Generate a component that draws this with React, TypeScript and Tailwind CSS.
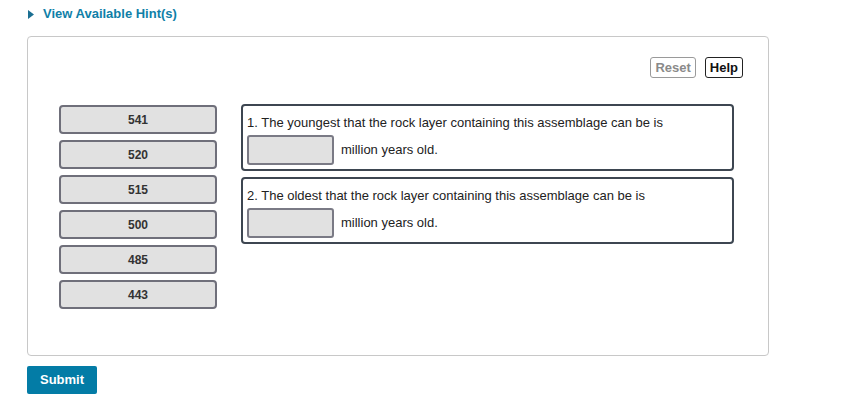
import React from 'react';

const ages = ['541', '520', '515', '500', '485', '443'];

const questions = [
  '1. The youngest that the rock layer containing this assemblage can be is',
  '2. The oldest that the rock layer containing this assemblage can be is',
];

const App: React.FC = () => {
  return (
    <div className="min-h-[413px] w-[863px] bg-white pl-[27px] pt-[6px] font-['Liberation_Sans',Arial,sans-serif] text-[#222]">
      {/* hint toggle */}
      <div className="flex h-[16px] items-center">
        <svg width="6" height="9" viewBox="0 0 6 9" className="ml-[1px]">
          <polygon points="0,0 6,4.5 0,9" fill="#1b6f92" />
        </svg>
        <span className="ml-[9px] text-[13px] font-bold text-[#0f7fa8]">View Available Hint(s)</span>
      </div>

      {/* main panel */}
      <div className="mt-[14px] h-[320px] w-[742px] rounded-[4px] border border-[#c8c8c8] pl-[31px] pr-[25px] pt-[20px]">
        <div className="flex justify-end gap-[9px]">
          <button className="h-[21px] rounded-[3px] border border-[#9a9a9a] px-[4px] text-[13px] font-bold leading-none text-[#8a8a8a]">
            Reset
          </button>
          <button className="h-[21px] rounded-[3px] border border-[#222] px-[4px] text-[13px] font-bold leading-none text-[#111]">
            Help
          </button>
        </div>

        <div className="mt-[26px] flex gap-[24px]">
          <div className="flex flex-col gap-[6px] pt-[1px]">
            {ages.map(a => (
              <div
                key={a}
                className="flex h-[29px] w-[158px] items-center justify-center rounded-[4px] border-2 border-[#6f6f7a] bg-[#e1e1e1] text-[12px] font-bold text-[#333]"
              >
                {a}
              </div>
            ))}
          </div>

          <div className="flex flex-col gap-[6px]">
            {questions.map(q => (
              <div
                key={q}
                className="h-[67px] w-[493px] rounded-[4px] border-2 border-[#3d4651] pl-[4px] pt-[9px] text-[13px] text-[#222]"
              >
                <div className="leading-[15px]">{q}</div>
                <div className="mt-[5px] flex items-start">
                  <div className="h-[30px] w-[87px] rounded-[3px] border-2 border-[#7a7a85] bg-[#e1e1e1]" />
                  <span className="ml-[7px] mt-[7px] leading-[15px]">million years old.</span>
                </div>
              </div>
            ))}
          </div>
        </div>
      </div>

      <button className="mt-[10px] h-[28px] w-[70px] rounded-[2px] bg-[#037ca6] text-[13px] font-bold text-white">
        Submit
      </button>
    </div>
  );
};

export default App;
